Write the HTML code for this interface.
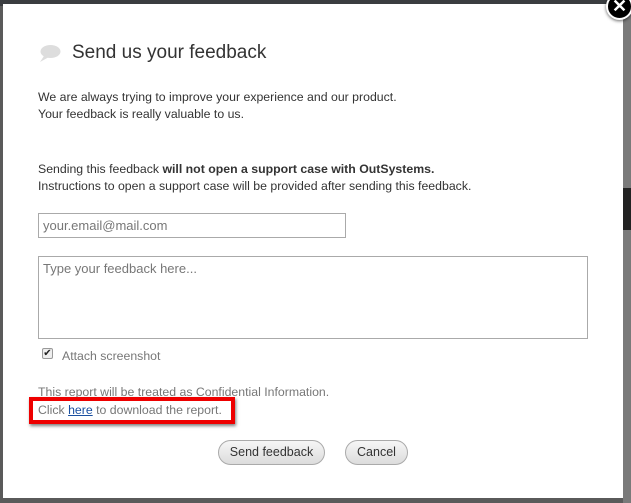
<!DOCTYPE html>
<html><head><meta charset="utf-8"><style>
*{margin:0;padding:0;box-sizing:border-box}
body{width:631px;height:503px;overflow:hidden;background:#5a5a5a;font-family:"Liberation Sans",sans-serif;position:relative}
.topbar{position:absolute;left:0;top:0;width:631px;height:6px;background:#3a3d40}
.rs{position:absolute;left:623px;top:0;width:8px;height:503px;background:#7a7a7a}
.rs2{position:absolute;left:623px;top:188px;width:8px;height:42px;background:#222}
.modal{position:absolute;left:3px;top:4px;width:620px;height:494px;background:#fff}
.t{position:absolute;font-size:12.3px;color:#333;white-space:nowrap}
.g{color:#777}
.inp{position:absolute;border:1px solid #aaa;background:#fff;font-size:13px;color:#777;padding:4px 4px}
.btn{position:absolute;height:25px;border:1px solid #aaa;border-radius:13px;background:linear-gradient(#f6f6f6,#dcdcdc);font-size:12.5px;color:#333;text-align:center;line-height:23px}
.close{position:absolute;left:606px;top:-7px;width:27px;height:27px;border-radius:50%;background:#000;border:2px solid #fff;box-shadow:0 1px 3px rgba(0,0,0,.6);color:#fff;font-weight:bold;font-size:18px;text-align:center;line-height:22px}
</style></head><body>
<div class="topbar"></div><div class="rs"></div><div class="rs2"></div>
<div class="modal"></div>
<svg style="position:absolute;left:38px;top:44px" width="24" height="18" viewBox="0 0 24 18"><ellipse cx="12.5" cy="7.5" rx="10" ry="6.5" fill="#ddd"/><path d="M6 12 L2 18 L11 13Z" fill="#ddd"/></svg>
<div class="t" style="left:72px;top:42px;font-size:19px;color:#333">Send us your feedback</div>
<div class="t" style="left:38px;top:90px">We are always trying to improve your experience and our product.</div>
<div class="t" style="left:38px;top:107px">Your feedback is really valuable to us.</div>
<div class="t" style="left:38px;top:162px">Sending this feedback <b>will not open a support case with OutSystems.</b></div>
<div class="t" style="left:38px;top:179px">Instructions to open a support case will be provided after sending this feedback.</div>
<div class="inp" style="left:38px;top:213px;width:308px;height:25px">your.email@mail.com</div>
<div class="inp" style="left:38px;top:256px;width:550px;height:83px">Type your feedback here...</div>
<div style="position:absolute;left:42px;top:348px;width:11px;height:11px;border:1px solid #999;background:#eee;border-radius:2px;font-size:10px;line-height:9px;text-align:center;color:#222">✔</div>
<div class="t g" style="left:62px;top:349px">Attach screenshot</div>
<div class="t g" style="left:38px;top:385px">This report will be treated as Confidential Information.</div>
<div style="position:absolute;left:29px;top:397px;width:206px;height:27px;border:4px solid #e00;box-shadow:1px 2px 3px rgba(0,0,0,.5)"></div>
<div class="t g" style="left:38px;top:403px">Click <span style="color:#1a4fa0;text-decoration:underline">here</span> to download the report.</div>
<div class="btn" style="left:218px;top:440px;width:107px">Send feedback</div>
<div class="btn" style="left:345px;top:440px;width:63px">Cancel</div>
<div class="close">✕</div>
</body></html>
